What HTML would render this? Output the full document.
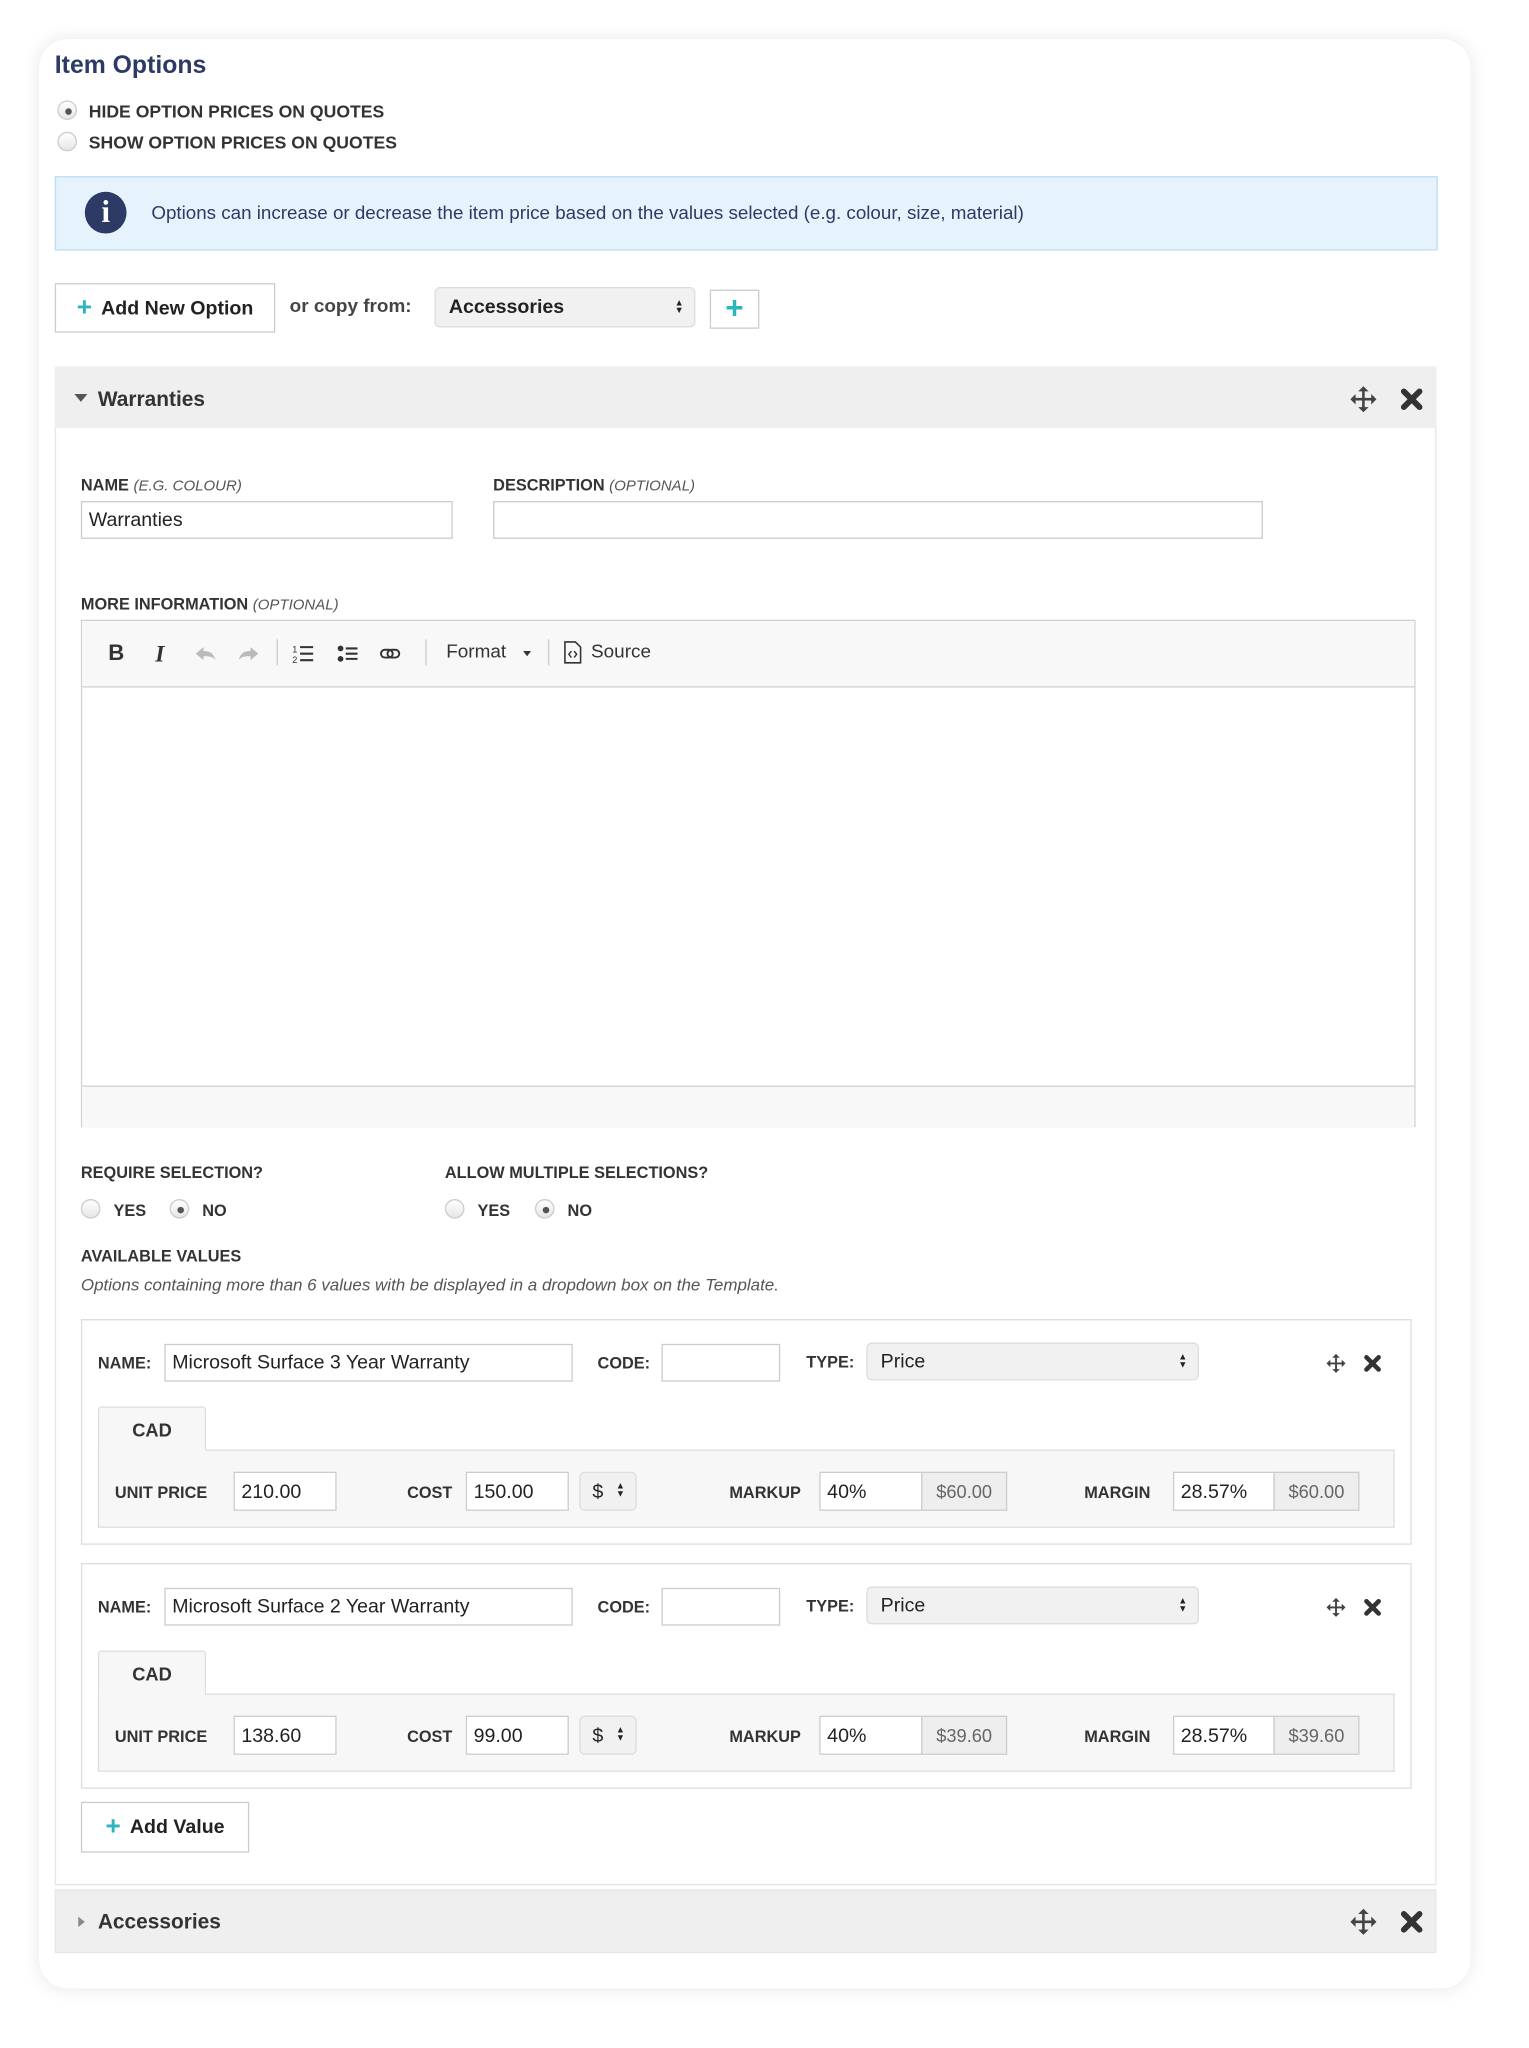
<!DOCTYPE html>
<html><head><meta charset="utf-8">
<style>
html,body{margin:0;padding:0;background:#fff;width:1529px;height:2048px;overflow:hidden}
#w{position:absolute;left:0;top:0;width:1172px;height:1569px;transform:scale(1.3047);transform-origin:0 0;font-family:"Liberation Sans",Arial,sans-serif;color:#333}
.a{position:absolute}
.card{left:30px;top:30px;width:1097px;height:1494px;background:#fff;border-radius:22px;box-shadow:0 0 14px rgba(0,0,0,.10)}
.lbl{font-weight:bold;font-size:12.5px;color:#333;white-space:nowrap}
.lbl i{font-weight:normal;font-size:11.5px;color:#555}
.inp{background:#fff;border:1px solid #ccc;box-sizing:border-box;font-size:15px;color:#222;padding:0 5px;display:flex;align-items:center;white-space:nowrap}
.sel{background:#f1f1f1;border:1px solid #ddd;border-radius:4px;box-sizing:border-box;font-size:15px;color:#222;padding:0 10px;display:flex;align-items:center}
.arr{position:absolute;right:8px;top:50%;transform:translateY(-50%);font-size:7px;line-height:6px;color:#222}
.radio{width:15px;height:15px;border-radius:50%;border:1px solid #ccc;background:linear-gradient(#fff,#e6e6e6);box-sizing:border-box}
.radio.on::after{content:"";position:absolute;left:4.5px;top:4.5px;width:5px;height:5px;border-radius:50%;background:#555}
.btn{background:#fff;border:1px solid #ccc;box-sizing:border-box;font-weight:bold;font-size:15px;color:#222;display:flex;align-items:center;justify-content:center}
.plus{color:#2bb5bd;font-weight:bold;font-size:20px;margin-right:7px}
.addon{background:#eee;border:1px solid #ccc;box-sizing:border-box;color:#666;font-size:14px;display:flex;align-items:center;justify-content:center}
</style></head><body><div id="w">
<div class="a card"></div>
<div class="a" style="left:42px;top:40px;font-size:19px;font-weight:bold;color:#2d3a66">Item Options</div>
<div class="a radio on" style="left:44px;top:77px"></div>
<div class="a lbl" style="left:68px;top:78px;font-size:13.5px;color:#333">HIDE OPTION PRICES ON QUOTES</div>
<div class="a radio" style="left:44px;top:101px"></div>
<div class="a lbl" style="left:68px;top:102px;font-size:13.5px;color:#333">SHOW OPTION PRICES ON QUOTES</div>

<div class="a" style="left:42px;top:135px;width:1058px;height:55px;background:#e6f3fd;border:1px solid #b9def5"></div>
<div class="a" style="left:65px;top:147px;width:32px;height:32px;border-radius:50%;background:#2d3a66;color:#fff;font-family:'Liberation Serif',serif;font-weight:bold;font-size:24px;text-align:center;line-height:32px">i</div>
<div class="a" style="left:116px;top:156px;font-size:14.4px;color:#2d3a66;white-space:nowrap">Options can increase or decrease the item price based on the values selected (e.g. colour, size, material)</div>

<div class="a btn" style="left:42px;top:217px;width:169px;height:38px"><span class="plus">+</span>Add New Option</div>
<div class="a" style="left:222px;top:227px;font-weight:bold;font-size:14.5px;color:#444">or copy from:</div>
<div class="a sel" style="left:333px;top:220px;width:200px;height:31px;font-weight:bold">Accessories<span class="arr">▲<br>▼</span></div>
<div class="a btn" style="left:544px;top:222px;width:38px;height:30px"><span class="plus" style="margin:0;font-size:24px">+</span></div>

<div class="a" style="left:42px;top:281px;width:1059px;height:1164px;border:1px solid #e6e6e6;box-sizing:border-box"></div>
<div class="a" style="left:42px;top:281px;width:1059px;height:47px;background:#efefef"></div>
<div class="a" style="left:57px;top:302px;width:0;height:0;border-left:5px solid transparent;border-right:5px solid transparent;border-top:6px solid #555"></div>
<div class="a" style="left:75px;top:298px;font-weight:bold;font-size:16px;color:#333">Warranties</div>
<svg class="a" style="left:1034px;top:295px" width="22" height="22" viewBox="0 0 22 22"><path d="M11 1l4 4h-3v5h5V7l4 4-4 4v-3h-5v5h3l-4 4-4-4h3v-5H5v3l-4-4 4-4v3h5V5H7z" fill="#444"/></svg>
<svg class="a" style="left:1073px;top:297px" width="18" height="18" viewBox="0 0 18 18"><path d="M3 3l12 12M15 3L3 15" stroke="#333" stroke-width="4.5" stroke-linecap="round"/></svg>

<div class="a lbl" style="left:62px;top:365px">NAME <i>(E.G. COLOUR)</i></div>
<div class="a inp" style="left:62px;top:384px;width:285px;height:29px">Warranties</div>
<div class="a lbl" style="left:378px;top:365px">DESCRIPTION <i>(OPTIONAL)</i></div>
<div class="a inp" style="left:378px;top:384px;width:590px;height:29px"></div>

<div class="a lbl" style="left:62px;top:456px">MORE INFORMATION <i>(OPTIONAL)</i></div>
<div class="a" style="left:62px;top:475px;width:1023px;height:389px;border:1px solid #d1d1d1;box-sizing:border-box;background:#fff"></div>
<div class="a" style="left:63px;top:476px;width:1021px;height:50px;background:#f8f8f8;border-bottom:1px solid #d1d1d1"></div>
<div class="a" style="left:63px;top:832px;width:1021px;height:31px;background:#f8f8f8;border-top:1px solid #d1d1d1"></div>
<div class="a" style="left:83px;top:491px;font-weight:bold;font-size:17px;color:#333">B</div>
<div class="a" style="left:119px;top:491px;font-style:italic;font-weight:bold;font-family:'Liberation Serif',serif;font-size:18px;color:#333">I</div>
<svg class="a" style="left:148px;top:493px" width="60" height="16" viewBox="0 0 60 16"><path d="M2 8l6-5v3c5 0 8 2 9 7-2-3-5-3-9-3v3z" fill="#bbb"/><path d="M50 8l-6-5v3c-5 0-8 2-9 7 2-3 5-3 9-3v3z" fill="#bbb"/></svg>
<div class="a" style="left:212px;top:490px;width:1px;height:20px;background:#ccc"></div>
<svg class="a" style="left:223px;top:492px" width="90" height="18" viewBox="0 0 90 18"><text x="1" y="8" font-size="7" font-family="Liberation Sans" fill="#333">1</text><text x="1" y="16" font-size="7" font-family="Liberation Sans" fill="#333">2</text><path d="M7 4h10M7 9h10M7 14h10" stroke="#333" stroke-width="1.6"/><circle cx="38" cy="5" r="2.2" fill="#333"/><circle cx="38" cy="13" r="2.2" fill="#333"/><path d="M42 5h9M42 13h9M42 9h9" stroke="#333" stroke-width="1.6"/><rect x="69" y="6" width="9" height="6" rx="3" fill="none" stroke="#333" stroke-width="1.5"/><rect x="74" y="6" width="9" height="6" rx="3" fill="none" stroke="#333" stroke-width="1.5"/></svg>
<div class="a" style="left:326px;top:490px;width:1px;height:20px;background:#ccc"></div>
<div class="a" style="left:342px;top:492px;font-size:14.5px;color:#333">Format</div>
<div class="a" style="left:401px;top:499px;width:0;height:0;border-left:3.5px solid transparent;border-right:3.5px solid transparent;border-top:4px solid #333"></div>
<div class="a" style="left:420px;top:490px;width:1px;height:20px;background:#ccc"></div>
<svg class="a" style="left:431px;top:491px" width="16" height="18" viewBox="0 0 16 18"><path d="M2 1h8l4 4v12H2z" fill="none" stroke="#333" stroke-width="1.2"/><path d="M7 8l-2 2.5 2 2.5M9 8l2 2.5-2 2.5" fill="none" stroke="#333" stroke-width="1.1"/></svg>
<div class="a" style="left:453px;top:492px;font-size:14.5px;color:#333">Source</div>

<div class="a lbl" style="left:62px;top:892px">REQUIRE SELECTION?</div>
<div class="a lbl" style="left:341px;top:892px">ALLOW MULTIPLE SELECTIONS?</div>
<div class="a radio" style="left:62px;top:919px"></div><div class="a lbl" style="left:87px;top:921px">YES</div>
<div class="a radio on" style="left:130px;top:919px"></div><div class="a lbl" style="left:155px;top:921px">NO</div>
<div class="a radio" style="left:341px;top:919px"></div><div class="a lbl" style="left:366px;top:921px">YES</div>
<div class="a radio on" style="left:410px;top:919px"></div><div class="a lbl" style="left:435px;top:921px">NO</div>
<div class="a lbl" style="left:62px;top:956px">AVAILABLE VALUES</div>
<div class="a" style="left:62px;top:977px;font-style:italic;font-size:13px;color:#555;white-space:nowrap">Options containing more than 6 values with be displayed in a dropdown box on the Template.</div>

<div class="a" style="left:0;top:1px">
 <div class="a" style="left:62px;top:1010px;width:1020px;height:173px;border:1px solid #ddd;box-sizing:border-box"></div>
 <div class="a lbl" style="left:75px;top:1037px">NAME:</div>
 <div class="a inp" style="left:126px;top:1029px;width:313px;height:29px">Microsoft Surface 3 Year Warranty</div>
 <div class="a lbl" style="left:458px;top:1037px">CODE:</div>
 <div class="a inp" style="left:507px;top:1029px;width:91px;height:29px"></div>
 <div class="a lbl" style="left:618px;top:1036px">TYPE:</div>
 <div class="a sel" style="left:664px;top:1028px;width:255px;height:29px">Price<span class="arr">▲<br>▼</span></div>
 <svg class="a" style="left:1016px;top:1036px" width="16" height="16" viewBox="0 0 22 22"><path d="M11 1l4 4h-3v5h5V7l4 4-4 4v-3h-5v5h3l-4 4-4-4h3v-5H5v3l-4-4 4-4v3h5V5H7z" fill="#444"/></svg>
 <svg class="a" style="left:1045px;top:1037px" width="14" height="14" viewBox="0 0 18 18"><path d="M3 3l12 12M15 3L3 15" stroke="#333" stroke-width="4.5" stroke-linecap="round"/></svg>
 <div class="a" style="left:75px;top:1077px;width:83px;height:34px;background:#f7f7f7;border:1px solid #ddd;border-bottom:none;border-radius:3px 3px 0 0;box-sizing:border-box;font-weight:bold;font-size:14px;color:#333;text-align:center;line-height:34px">CAD</div>
 <div class="a" style="left:75px;top:1110px;width:994px;height:60px;background:#f7f7f7;border:1px solid #ddd;box-sizing:border-box"></div>
 <div class="a" style="left:76px;top:1109px;width:81px;height:3px;background:#f7f7f7"></div>
 <div class="a lbl" style="left:88px;top:1136px">UNIT PRICE</div>
 <div class="a inp" style="left:179px;top:1127px;width:79px;height:30px">210.00</div>
 <div class="a lbl" style="left:312px;top:1136px">COST</div>
 <div class="a inp" style="left:357px;top:1127px;width:79px;height:30px">150.00</div>
 <div class="a sel" style="left:444px;top:1127px;width:44px;height:30px;padding:0 9px">$<span class="arr">▲<br>▼</span></div>
 <div class="a lbl" style="left:559px;top:1136px">MARKUP</div>
 <div class="a inp" style="left:628px;top:1127px;width:79px;height:30px">40%</div>
 <div class="a addon" style="left:706px;top:1127px;width:66px;height:30px">$60.00</div>
 <div class="a lbl" style="left:831px;top:1136px">MARGIN</div>
 <div class="a inp" style="left:899px;top:1127px;width:78px;height:30px">28.57%</div>
 <div class="a addon" style="left:976px;top:1127px;width:66px;height:30px">$60.00</div>
</div>
<div class="a" style="left:0;top:188px">
 <div class="a" style="left:62px;top:1010px;width:1020px;height:173px;border:1px solid #ddd;box-sizing:border-box"></div>
 <div class="a lbl" style="left:75px;top:1037px">NAME:</div>
 <div class="a inp" style="left:126px;top:1029px;width:313px;height:29px">Microsoft Surface 2 Year Warranty</div>
 <div class="a lbl" style="left:458px;top:1037px">CODE:</div>
 <div class="a inp" style="left:507px;top:1029px;width:91px;height:29px"></div>
 <div class="a lbl" style="left:618px;top:1036px">TYPE:</div>
 <div class="a sel" style="left:664px;top:1028px;width:255px;height:29px">Price<span class="arr">▲<br>▼</span></div>
 <svg class="a" style="left:1016px;top:1036px" width="16" height="16" viewBox="0 0 22 22"><path d="M11 1l4 4h-3v5h5V7l4 4-4 4v-3h-5v5h3l-4 4-4-4h3v-5H5v3l-4-4 4-4v3h5V5H7z" fill="#444"/></svg>
 <svg class="a" style="left:1045px;top:1037px" width="14" height="14" viewBox="0 0 18 18"><path d="M3 3l12 12M15 3L3 15" stroke="#333" stroke-width="4.5" stroke-linecap="round"/></svg>
 <div class="a" style="left:75px;top:1077px;width:83px;height:34px;background:#f7f7f7;border:1px solid #ddd;border-bottom:none;border-radius:3px 3px 0 0;box-sizing:border-box;font-weight:bold;font-size:14px;color:#333;text-align:center;line-height:34px">CAD</div>
 <div class="a" style="left:75px;top:1110px;width:994px;height:60px;background:#f7f7f7;border:1px solid #ddd;box-sizing:border-box"></div>
 <div class="a" style="left:76px;top:1109px;width:81px;height:3px;background:#f7f7f7"></div>
 <div class="a lbl" style="left:88px;top:1136px">UNIT PRICE</div>
 <div class="a inp" style="left:179px;top:1127px;width:79px;height:30px">138.60</div>
 <div class="a lbl" style="left:312px;top:1136px">COST</div>
 <div class="a inp" style="left:357px;top:1127px;width:79px;height:30px">99.00</div>
 <div class="a sel" style="left:444px;top:1127px;width:44px;height:30px;padding:0 9px">$<span class="arr">▲<br>▼</span></div>
 <div class="a lbl" style="left:559px;top:1136px">MARKUP</div>
 <div class="a inp" style="left:628px;top:1127px;width:79px;height:30px">40%</div>
 <div class="a addon" style="left:706px;top:1127px;width:66px;height:30px">$39.60</div>
 <div class="a lbl" style="left:831px;top:1136px">MARGIN</div>
 <div class="a inp" style="left:899px;top:1127px;width:78px;height:30px">28.57%</div>
 <div class="a addon" style="left:976px;top:1127px;width:66px;height:30px">$39.60</div>
</div>

<div class="a btn" style="left:62px;top:1381px;width:129px;height:39px"><span class="plus">+</span>Add Value</div>

<div class="a" style="left:42px;top:1448px;width:1059px;height:49px;background:#efefef;border:1px solid #e6e6e6;box-sizing:border-box"></div>
<div class="a" style="left:60px;top:1469px;width:0;height:0;border-top:4px solid transparent;border-bottom:4px solid transparent;border-left:5px solid #888"></div>
<div class="a" style="left:75px;top:1465px;font-weight:bold;font-size:16px;color:#333">Accessories</div>
<svg class="a" style="left:1034px;top:1462px" width="22" height="22" viewBox="0 0 22 22"><path d="M11 1l4 4h-3v5h5V7l4 4-4 4v-3h-5v5h3l-4 4-4-4h3v-5H5v3l-4-4 4-4v3h5V5H7z" fill="#444"/></svg>
<svg class="a" style="left:1073px;top:1464px" width="18" height="18" viewBox="0 0 18 18"><path d="M3 3l12 12M15 3L3 15" stroke="#333" stroke-width="4.5" stroke-linecap="round"/></svg>
</div></body></html>
